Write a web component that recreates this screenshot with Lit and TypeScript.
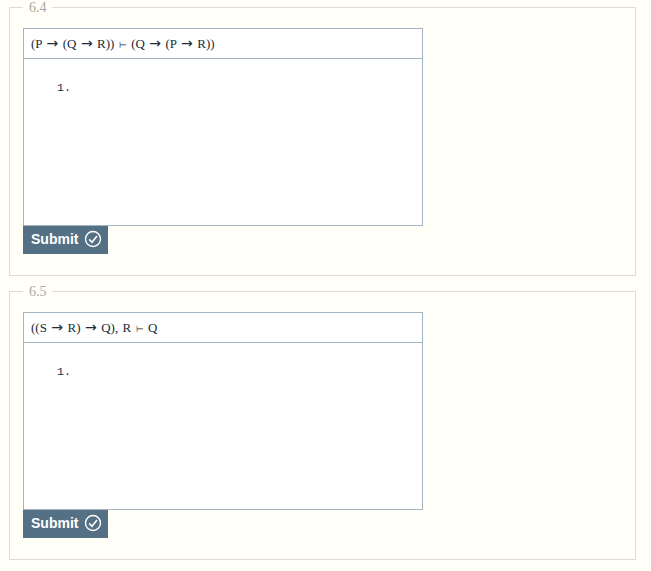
import { LitElement, html, css } from "lit";
import { customElement, property } from "lit/decorators.js";

// one exercise: a sequent to prove, an empty numbered proof area, and a submit button
@customElement("proof-box")
export class ProofBox extends LitElement {
  static styles = css`
    :host {
      display: block;
    }

    fieldset {
      margin: 0;
      padding: 14px 13px 0 13px;
      height: 276px;
      box-sizing: border-box;
      border: 1px solid #dcdcd6;
      min-width: 0;
    }

    legend {
      margin-left: 0;
      padding: 2px 5px 0 6px;
      font: 14px/12px "Liberation Serif", serif;
      color: #a8a8a8;
    }

    .editor {
      width: 400px;
      height: 198px;
      box-sizing: border-box;
      border: 1px solid #a3b3c2;
      background: #fff;
      display: flex;
      flex-direction: column;
    }

    .sequent {
      height: 30px;
      flex: none;
      box-sizing: border-box;
      border-bottom: 1px solid #a3b3c2;
      padding: 0 7px;
      display: flex;
      align-items: center;
      font: 13px "Liberation Serif", serif;
      color: #222b36;
      white-space: pre;
      word-spacing: 1.2px;
    }

    .arrow {
      font: 14px "DejaVu Sans", sans-serif;
    }

    .turnstile {
      font: 9px "DejaVu Sans", sans-serif;
    }

    .proof {
      padding: 21px 0 0 33px;
      font: 11.5px/15px "Liberation Mono", monospace;
      color: #00304f;
    }

    button {
      display: flex;
      align-items: center;
      gap: 6px;
      width: 85px;
      height: 28px;
      padding: 0 0 2px 8px;
      box-sizing: border-box;
      border: none;
      border-radius: 0;
      background: #547085;
      color: #fff;
      font: bold 14px "Liberation Sans", sans-serif;
    }

    button svg {
      width: 18px;
      height: 18px;
      flex: none;
    }
  `;

  @property() label = "";
  @property() sequent = "";

  private _symbols() {
    return this.sequent.split(/([→⊢])/).map((part) => {
      if (part === "→") return html`<span class="arrow">${part}</span>`;
      if (part === "⊢") return html`<span class="turnstile">${part}</span>`;
      return part;
    });
  }

  render() {
    return html`
      <fieldset>
        <legend>${this.label}</legend>
        <div class="editor">
          <div class="sequent"><span>${this._symbols()}</span></div>
          <div class="proof">1.</div>
        </div>
        <button type="button">
          Submit
          <svg viewBox="0 0 18 18" fill="none" stroke="#fff">
            <circle cx="9" cy="9" r="7.5" stroke-width="1.4" />
            <path d="M5.2 9.4 L8 12.2 L13 6" stroke-width="1.6" />
          </svg>
        </button>
      </fieldset>
    `;
  }
}

@customElement("app-root")
export class AppRoot extends LitElement {
  static styles = css`
    :host {
      display: block;
      min-height: 571px;
      background: #fffff7;
    }

    .list {
      display: flex;
      flex-direction: column;
      gap: 8px;
      width: 627px;
      margin-left: 9px;
    }
  `;

  render() {
    return html`
      <div class="list">
        <proof-box label="6.4" sequent="(P → (Q → R)) ⊢ (Q → (P → R))"></proof-box>
        <proof-box label="6.5" sequent="((S → R) → Q), R ⊢ Q"></proof-box>
      </div>
    `;
  }
}
